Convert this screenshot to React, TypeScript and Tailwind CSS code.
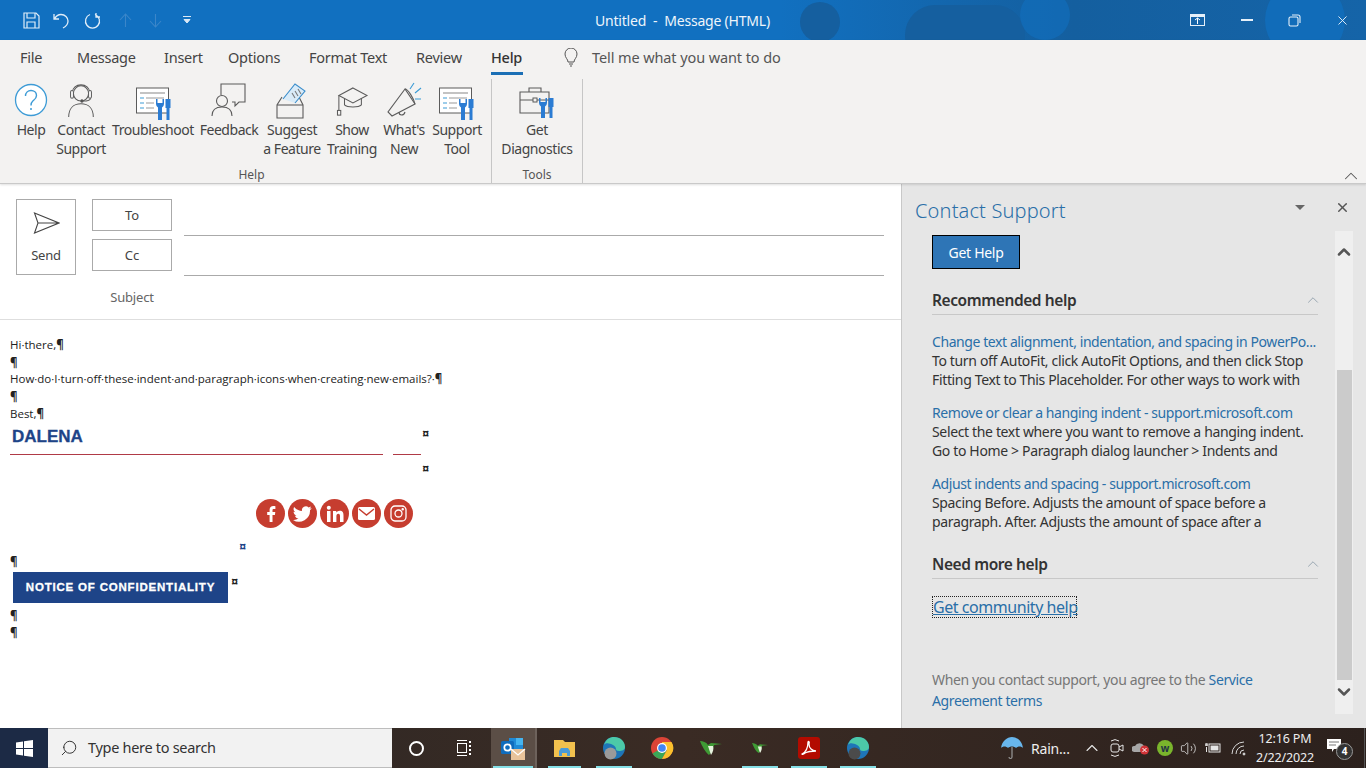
import React from "react";
import { Search, X, ChevronUp, ChevronDown, Volume2 } from "lucide-react";

const tabs: [string, string][] = [
  ["File", "w-[57px]"],
  ["Message", "w-[87px]"],
  ["Insert", "w-[64px]"],
  ["Options", "w-[81px]"],
  ["Format Text", "w-[107px]"],
  ["Review", "w-[75px]"],
];

const S = "#5b5b5b";
const B = "#2b7cd3";

const HelpIco = () => (
  <svg width="34" height="34" viewBox="0 0 34 34" fill="none">
    <circle cx="17" cy="17" r="15.5" stroke="#3d9bd6" strokeWidth="1.3" fill="#fff" />
    <path d="M11.5 13c0-3.5 2.5-5.5 5.5-5.5s5.5 2 5.5 5c0 3-2 4-3.700 5.500-1.300 1.100-1.800 2.300-1.800 4.500" stroke="#3d9bd6" strokeWidth="1.400" />
    <circle cx="17" cy="26" r="1" fill="#3d9bd6" />
  </svg>
);
const ContactIco = () => (
  <svg width="34" height="36" viewBox="0 0 34 38" fill="none" stroke={S} strokeWidth="1.100">
    <circle cx="17" cy="11" r="8" />
    <path d="M8 13v-3c0-5 4-8 9-8s9 3 9 8v3" />
    <rect x="6" y="8" width="3" height="8" rx="1.500" fill="#fff" />
    <rect x="25" y="8" width="3" height="8" rx="1.500" fill="#fff" />
    <path d="M27 16c0 2-3 3-8 3" />
    <circle cx="18" cy="19" r="1.200" fill="#333" />
    <path d="M4 36c0-9 5-14 13-14s13 5 13 14" />
  </svg>
);
const TroubleIco = () => (
  <svg width="36" height="34" viewBox="0 0 36 34" fill="none">
    <rect x="0.500" y="1" width="32" height="25" fill="#fff" stroke={S} strokeWidth="1" />
    <path d="M4 6h25" stroke="#9a9a9a" strokeWidth="1.200" />
    <path d="M4 11h4M4 16h4M4 21h4" stroke="#3d9bd6" strokeWidth="1.200" />
    <path d="M10 11h18M10 16h8M10 21h8" stroke="#9a9a9a" strokeWidth="1.200" />
    <path d="M20 12v5a4 4 0 0 0 2 3.400V33h4V20.400a4 4 0 0 0 2-3.400v-5h-1.500v4h-5v-4z" fill={B} />
    <path d="M29.500 12h5v9h-1v12h-3V21h-1z" fill={B} />
  </svg>
);
const FeedbackIco = () => (
  <svg width="36" height="36" viewBox="0 0 36 36" fill="none" stroke={S} strokeWidth="1.100">
    <path d="M10 12V1h24v18h-6l-4 4v-4h-3" />
    <circle cx="11" cy="18" r="5.500" fill="#f3f2f1" />
    <path d="M1 33c0-6 4-9 10-9s10 3 10 9" />
  </svg>
);
const SuggestIco = () => (
  <svg width="34" height="36" viewBox="0 0 34 36" fill="none" stroke={S} strokeWidth="1.100">
    <path d="M7 14l-5 8v13h26V22l-4-8" />
    <path d="M2 22h26" />
    <path d="M8 16L20 1l10 7-10 12" fill="#d9ebf8" stroke="#3a8dcb" />
    <path d="M17 10l3 5M20 8l3 5M23 6l3 5" stroke="#7a7a7a" />
  </svg>
);
const TrainingIco = () => (
  <svg width="34" height="30" viewBox="0 0 34 32" fill="none" stroke={S} strokeWidth="1.100">
    <path d="M18 1L33 9 18 17 3 9z" />
    <path d="M9 12v7c3 3 15 3 18 0v-7" />
    <path d="M3 9v16" />
    <rect x="1.500" y="25" width="3.500" height="5" />
  </svg>
);
const WhatsNewIco = () => (
  <svg width="38" height="38" viewBox="0 0 36 38" fill="none" stroke={S} strokeWidth="1.100">
    <path d="M19 8L2 31l4 4 23-12z" />
    <path d="M19 8c3 0 9 10 10 15" />
    <path d="M13 31c0 4 5 4 6 0" />
    <path d="M24 8l4-6M29 12l6-5M29 18h6" stroke="#3a9bd6" />
  </svg>
);
const DiagIco = () => (
  <svg width="36" height="32" viewBox="0 0 36 32" fill="none">
    <path d="M10 5V1h12v4M1 5h29v21H1zM1 13h13M18 13h12" stroke={S} strokeWidth="1.100" />
    <rect x="14" y="11" width="4" height="4" stroke={S} />
    <path d="M20 11v5a4 4 0 0 0 2 3.400V31h4V19.400a4 4 0 0 0 2-3.400v-5h-1.500v4h-5v-4z" fill={B} />
    <path d="M29.500 11h5v9h-1v11h-3V20h-1z" fill={B} />
  </svg>
);

const ribbon: { w: string; l: string[]; icon: React.ReactNode; top: string }[] = [
  { w: "w-[38px]", l: ["Help"], icon: <HelpIco />, top: "pt-[4px]" },
  { w: "w-[62px]", l: ["Contact", "Support"], icon: <ContactIco />, top: "pt-[4px]" },
  { w: "w-[82px]", l: ["Troubleshoot"], icon: <div className="pl-[1px]"><TroubleIco /></div>, top: "pt-[8px]" },
  { w: "w-[70px]", l: ["Feedback"], icon: <FeedbackIco />, top: "pt-[4px]" },
  { w: "w-[56px]", l: ["Suggest", "a Feature"], icon: <SuggestIco />, top: "pt-[4px]" },
  { w: "w-[64px]", l: ["Show", "Training"], icon: <TrainingIco />, top: "pt-[8px]" },
  { w: "w-[40px]", l: ["What's", "New"], icon: <WhatsNewIco />, top: "pt-[2px]" },
  { w: "w-[66px]", l: ["Support", "Tool"], icon: <TroubleIco />, top: "pt-[8px]" },
];

const RibbonItem = ({ w, l, icon, top }: { w: string; l: string[]; icon: React.ReactNode; top: string }) => (
  <div className={`${w} flex flex-col items-center`}>
    <div className={`h-[40px] flex items-start justify-center ${top}`}>{icon}</div>
    <div className="mt-[1px] text-center text-[14px] leading-[19px] text-[#444] whitespace-nowrap tracking-[-0.45px]">
      {l.map((t) => (
        <div key={t}>{t}</div>
      ))}
    </div>
  </div>
);

const Pilcrow = () => <div className="h-[17px] pt-[1px] leading-[17px] font-bold">¶</div>;

const Circle = ({ children }: { children: React.ReactNode }) => (
  <div className="w-[29px] h-[29px] rounded-full bg-[#c63d2f] flex items-center justify-center text-white">{children}</div>
);

const social = [
  <svg key="f" width="16" height="18" viewBox="0 0 16 18" fill="#fff"><path d="M9.500 17V10h2.400l.4-3H9.500V5.300c0-.9.300-1.400 1.400-1.400h1.500V1.200C12 1.100 11.200 1 10.300 1 8.100 1 6.600 2.300 6.600 4.800V7H4.200v3h2.400v7z" /></svg>,
  <svg key="t" width="19" height="16" viewBox="0 0 24 20" fill="#fff"><path d="M23.500 2.400c-.9.400-1.800.6-2.800.8 1-.6 1.800-1.500 2.100-2.700-.9.600-2 1-3.100 1.200A4.900 4.900 0 0 0 11.400 6.200C7.400 6 3.800 4.100 1.400 1.100c-1.300 2.200-.7 5.100 1.500 6.600-.8 0-1.500-.2-2.200-.6 0 2.400 1.700 4.400 3.900 4.900-.7.200-1.500.2-2.200.1.600 2 2.400 3.400 4.600 3.400A9.900 9.900 0 0 1 0 17.500 14 14 0 0 0 21.500 5.100c1-.7 1.800-1.600 2-2.700z" /></svg>,
  <svg key="i" width="18" height="18" viewBox="0 0 18 18" fill="#fff"><rect x="1" y="6" width="3.500" height="11" /><circle cx="2.800" cy="2.800" r="2" /><path d="M7 6h3.300v1.600C11 6.500 12.200 5.700 13.700 5.700c3 0 3.800 2 3.800 4.800V17H14v-5.800c0-1.400-.3-2.500-1.700-2.500s-1.900 1.100-1.900 2.500V17H7z" /></svg>,
  <svg key="m" width="17" height="13" viewBox="0 0 17 13"><rect width="17" height="13" rx="1.500" fill="#fff" /><path d="M1 2l7.500 6L16 2" fill="none" stroke="#c63d2f" strokeWidth="1.500" /></svg>,
  <svg key="g" width="17" height="17" viewBox="0 0 17 17" fill="none" stroke="#fff" strokeWidth="1.300"><rect x="1" y="1" width="15" height="15" rx="4" /><circle cx="8.500" cy="8.500" r="3.500" /><circle cx="12.700" cy="4.300" r=".6" fill="#fff" /></svg>,
];

const ArticleBlock = ({ t, a, b }: { t: string; a: string; b: string }) => (
  <div className="h-[71px] text-[14px] leading-[19px] whitespace-nowrap tracking-[-0.35px]">
    <div className="text-[#2a6fa8] tracking-[-0.42px]">{t}</div>
    <div className="text-[#333]">{a}</div>
    <div className="text-[#333]">{b}</div>
  </div>
);

const SectionHead = ({ t }: { t: string }) => (
  <div className="h-[26px] border-b border-[#c8c8c8] flex items-start justify-between">
    <span className="text-[15.500px] leading-[22px] font-semibold text-[#333] tracking-[-0.4px]">{t}</span>
    <ChevronUp className="w-[18px] h-[18px] mt-[2px] -mr-[4px] text-[#8a9aa8]" strokeWidth={1.100} />
  </div>
);

const Bar = ({ w }: { w: string }) => <div className={`absolute bottom-0 h-[2px] bg-[#85dfe6] ${w}`} />;

const Tb = ({ w, active, bar, children }: { w: string; active?: boolean; bar?: boolean; children: React.ReactNode }) => (
  <div className={`${w} h-full flex items-center justify-center relative ${active ? "bg-[#5b4e46] border-r-2 border-[#6d625b]" : ""}`}>
    {children}
    {bar && <Bar w="left-[2px] right-[2px]" />}
  </div>
);

const EdgeIco = ({ badge }: { badge: string }) => (
  <svg width="24" height="24" viewBox="0 0 24 24">
    <circle cx="12" cy="12" r="11" fill="#1e75b8" />
    <path d="M2 9C4 3 8 1 12 1c6 0 11 4 11 10 0 3-3 4-6 4-2 0-3-1-3-2 0-4-10-8-12-4z" fill="#4cc9a8" />
    <circle cx="8.500" cy="17.500" r="6" fill={badge} />
  </svg>
);

export default function App() {
  return (
    <div className="w-[1366px] h-[768px] overflow-hidden flex flex-col bg-white font-['Noto_Sans',sans-serif]">
      {/* Title bar */}
      <div className="h-[40px] shrink-0 bg-[#1170c0] relative flex items-center text-white overflow-hidden">
        <div className="absolute inset-y-0 right-0 w-[586px] bg-gradient-to-r from-[#1170c0] via-[#145f9f] to-[#1564a8]" />
        <div className="absolute left-[800px] top-[2px] w-[40px] h-[40px] rounded-full bg-[#155f9f]" />
        <div className="absolute left-[905px] top-[5px] w-[120px] h-[60px] rounded-full bg-[#155f9f]" />
        <div className="absolute left-[1020px] top-[-10px] w-[50px] h-[50px] rounded-full bg-[#1170c0] opacity-60" />
        <div className="absolute left-[1265px] top-[-20px] w-[80px] h-[80px] rounded-full bg-[#116cb9]" />
        <div className="relative flex items-center pl-[23px] gap-[13px]">
          <svg width="17" height="17" viewBox="0 0 17 17" fill="none" stroke="#e0edf8" strokeWidth="1.200"><path d="M1 1h12l3 3v12H1z" /><path d="M4 1v5h8V1M4 16v-6h8v6" /></svg>
          <svg width="18" height="17" viewBox="0 0 18 17" fill="none" stroke="#e0edf8" strokeWidth="1.300"><path d="M1 2v5h5M1.500 7C3 4 5 2.500 8 2.500c4 0 7 3 7 6.500 0 3-2 5.500-5 7" /></svg>
          <svg width="18" height="17" viewBox="0 0 18 17" fill="none" stroke="#e0edf8" strokeWidth="1.300"><path d="M11 2.500a7 7 0 1 1-5 0M12 1v4h4" /></svg>
          <svg className="ml-[3px]" width="15" height="15" viewBox="0 0 15 15" fill="none" stroke="#3b86c9" strokeWidth="1.100"><path d="M7.500 14V1M2 7l5.500-6L13 7" /></svg>
          <svg className="ml-[2px]" width="15" height="15" viewBox="0 0 15 15" fill="none" stroke="#3b86c9" strokeWidth="1.100"><path d="M7.500 1v13M2 8l5.500 6L13 8" /></svg>
          <svg className="ml-[6px]" width="10" height="10" viewBox="0 0 10 10" fill="none" stroke="#dbe9f6" strokeWidth="1"><path d="M1 1.500h8" /><path d="M2 4.500h6L5 8z" fill="#dbe9f6" /></svg>
        </div>
        <div className="absolute left-[595px] top-0 h-full flex items-center text-[14px] text-[#eef5fb] tracking-[-0.2px] whitespace-pre">Untitled  -  Message (HTML)</div>
        <div className="ml-auto relative flex items-center h-full">
          <svg width="15" height="12" viewBox="0 0 15 12" className="mr-[36px]"><rect width="15" height="12" fill="#e6f0f9" /><rect x="1" y="3" width="13" height="8" fill="#1664a8" /><path d="M7.500 4v6M5 6l2.500-2L10 6" stroke="#fff" fill="none" /></svg>
          <div className="w-[12px] h-[1.500px] bg-[#e6f0f9] mr-[35px]" />
          <svg width="13" height="13" viewBox="0 0 13 13" fill="none" stroke="#e6f0f9" strokeWidth="1.100" className="mr-[34px]"><rect x="1" y="3" width="9" height="9" rx="1.500" /><path d="M4 1h6a2 2 0 0 1 2 2v6" /></svg>
          <X className="w-[15px] h-[15px] mr-[16px] text-[#e6f0f9]" strokeWidth={1.500} />
        </div>
      </div>

      {/* Ribbon */}
      <div className="h-[144px] shrink-0 bg-[#f3f2f1] border-b border-[#c9c9c9] shadow-[0_1px_2px_rgba(0,0,0,0.12)] relative z-10 text-[#444]">
        <div className="h-[36px] flex items-center pl-[20px] text-[14.500px] tracking-[-0.25px] whitespace-nowrap">
          {tabs.map(([t, c]) => (
            <div key={t} className={c}>{t}</div>
          ))}
          <div className="relative w-[72px] font-medium text-[#333]">
            Help
            <div className="absolute left-0 w-[32px] top-[25px] h-[3px] bg-[#1b6fb5]" />
          </div>
          <svg width="16" height="20" viewBox="0 0 16 20" fill="none" stroke="#555" strokeWidth="1" className="mr-[13px]"><path d="M5 14c0-3-3-4-3-8a6 6 0 0 1 12 0c0 4-3 5-3 8zM6 16h4M7 18h2" /></svg>
          <span className="text-[14.500px] text-[#555] tracking-[-0.1px]">Tell me what you want to do</span>
        </div>
        <div className="h-[107px] flex pl-[12px]">
          <div className="relative w-[480px] h-[104px] flex border-r border-[#c6c6c6] mt-[3px]">
            {ribbon.map((r, i) => (
              <RibbonItem key={i} {...r} />
            ))}
            <div className="absolute bottom-0 inset-x-0 text-center text-[12px] leading-[16px] text-[#555]">Help</div>
          </div>
          <div className="relative w-[91px] h-[104px] flex border-r border-[#c6c6c6] mt-[3px]">
            <RibbonItem w="w-[90px]" l={["Get", "Diagnostics"]} icon={<DiagIco />} top="pt-[8px]" />
            <div className="absolute bottom-0 inset-x-0 text-center text-[12px] leading-[16px] text-[#555]">Tools</div>
          </div>
        </div>
        <ChevronUp className="absolute right-[4px] bottom-[-4px] w-[22px] h-[22px] text-[#555]" strokeWidth={1.100} />
      </div>

      {/* Main */}
      <div className="flex-1 min-h-0 flex">
        <div className="w-[901px] shrink-0 bg-white flex flex-col">
          {/* header */}
          <div className="h-[136px] shrink-0 border-b border-[#dedede] flex pl-[16px] pt-[15px]">
            <div className="w-[60px] h-[76px] border border-[#aaa] flex flex-col items-center pt-[11px]">
              <svg width="27" height="24" viewBox="0 0 27 24" fill="none" stroke="#444" strokeWidth="1.100"><path d="M1.500 2L26 12 1.500 22 5 12zM5 12h21" /></svg>
              <div className="mt-[11px] text-[13px] text-[#444] leading-[18px] tracking-[-0.2px]">Send</div>
            </div>
            <div className="ml-[16px] w-[80px] flex flex-col">
              <div className="h-[32px] border border-[#aaa] flex items-center justify-center pt-[1px] text-[13px] text-[#444]">To</div>
              <div className="mt-[8px] h-[32px] border border-[#aaa] flex items-center justify-center pt-[1px] text-[13px] text-[#444]">Cc</div>
              <div className="mt-[17px] text-center text-[13px] leading-[18px] text-[#666] tracking-[-0.2px]">Subject</div>
            </div>
            <div className="ml-[12px] w-[700px]">
              <div className="h-[37px] border-b border-[#aaa]" />
              <div className="h-[40px] border-b border-[#aaa]" />
            </div>
          </div>
          {/* body */}
          <div className="flex-1 pl-[10px] pt-[16px] text-[11.500px] leading-[17px] text-[#222] font-['Open_Sans',sans-serif]">
            <div className="h-[17px]">Hi·there,<b>¶</b></div>
            <Pilcrow />
            <div className="h-[17px] whitespace-nowrap">How·do·I·turn·off·these·indent·and·paragraph·icons·when·creating·new·emails?·<b>¶</b></div>
            <Pilcrow />
            <div className="h-[17px] pt-[1px]">Best,<b>¶</b></div>
            <div className="w-[421px] h-[33px] mt-[4px] relative flex items-start">
              <span className="ml-[2px] font-['Liberation_Sans',sans-serif] font-bold text-[#1e4488] text-[17px] leading-[24px] [-webkit-text-stroke:0.3px_#1e4488]">DALENA</span>
              <span className="absolute left-[412px] top-[2px] text-[13px] leading-[12px] font-bold">¤</span>
            </div>
            <div className="w-[411px] flex gap-[10px] -mt-[4px]">
              <div className="w-[373px] h-px bg-[#b03a46]" />
              <div className="w-[28px] h-px bg-[#b03a46]" />
            </div>
            <div className="w-[421px] h-[10px] pl-[412px] mt-[7px] pt-[1px] text-[13px] leading-[10px] font-bold">¤</div>
            <div className="pl-[246px] flex gap-[3px] mt-[27px]">
              {social.map((s, i) => (
                <Circle key={i}>{s}</Circle>
              ))}
            </div>
            <div className="pl-[229px] mt-[10px] pt-[1px] h-[14px] text-[13px] leading-[14px] font-bold text-[#1e4488]">¤</div>
            <div><Pilcrow /></div>
            <div className="ml-[3px] mt-[3px] flex items-start">
              <div className="w-[215px] h-[31px] bg-[#1e4488] flex items-center justify-center text-white font-['Liberation_Sans',sans-serif] font-bold text-[11.500px] tracking-[0.8px] whitespace-nowrap [-webkit-text-stroke:0.3px_#fff]">NOTICE OF CONFIDENTIALITY</div>
              <span className="ml-[3px] pt-[2px] text-[13px] leading-[14px] font-bold">¤</span>
            </div>
            <div className="mt-[3px]"><Pilcrow /></div>
            <Pilcrow />
          </div>
        </div>

        {/* Side panel */}
        <div className="flex-1 min-w-0 bg-[#e6e6e6] border-l border-[#c8c8c8] flex flex-col">
          <div className="h-[47px] shrink-0 flex items-center pl-[13px] relative">
            <span className="text-[20px] text-[#2a6fa8] tracking-[0.15px] mt-[6px] font-light">Contact Support</span>
            <div className="absolute left-[393px] top-[21px] w-0 h-0 border-x-[5px] border-x-transparent border-t-[5px] border-t-[#666]" />
            <X className="absolute left-[433px] top-[16px] w-[15px] h-[15px] text-[#555]" strokeWidth={2.400} />
          </div>
          <div className="flex-1 min-h-0 flex">
            <div className="w-[433px] shrink-0 pl-[30px] pr-[17px] pt-[4px]">
              <div className="w-[88px] h-[34px] bg-[#2e75b6] border border-black flex items-center justify-center text-white text-[14px] tracking-[-0.3px]">Get Help</div>
              <div className="mt-[20px]"><SectionHead t="Recommended help" /></div>
              <div className="mt-[17px]">
                <ArticleBlock t="Change text alignment, indentation, and spacing in PowerPo..." a="To turn off AutoFit, click AutoFit Options, and then click Stop" b="Fitting Text to This Placeholder. For other ways to work with" />
                <ArticleBlock t="Remove or clear a hanging indent - support.microsoft.com" a="Select the text where you want to remove a hanging indent." b="Go to Home > Paragraph dialog launcher > Indents and" />
                <ArticleBlock t="Adjust indents and spacing - support.microsoft.com" a="Spacing Before. Adjusts the amount of space before a" b="paragraph. After. Adjusts the amount of space after a" />
              </div>
              <div className="mt-[8px]"><SectionHead t="Need more help" /></div>
              <div className="mt-[17px] w-[145px] h-[22px] border border-dotted border-[#222] text-[16px] leading-[20px] text-[#2a6fa8] underline whitespace-nowrap tracking-[-0.45px]">Get community help</div>
              <div className="mt-[51px] text-[14px] leading-[21px] text-[#777] tracking-[-0.38px] whitespace-nowrap">
                <div>When you contact support, you agree to the <span className="text-[#2a6fa8]">Service</span></div>
                <div className="text-[#2a6fa8]">Agreement terms</div>
              </div>
            </div>
            <div className="w-[18px] h-[483px] bg-[#efefef] flex flex-col items-center">
              <ChevronUp className="w-[20px] h-[20px] mt-[11px] text-[#555] shrink-0" strokeWidth={3} />
              <div className="w-[15px] h-[310px] bg-[#cbcbcb] mt-[108px] shrink-0" />
              <ChevronDown className="w-[20px] h-[20px] mt-[2px] text-[#555] shrink-0" strokeWidth={3} />
            </div>
          </div>
        </div>
      </div>

      {/* Taskbar */}
      <div className="h-[40px] shrink-0 bg-gradient-to-r from-[#2b2725] via-[#3a2b24] to-[#2c211d] flex items-center text-white">
        <div className="w-[48px] h-full bg-[#1c2a45] flex items-center justify-center">
          <svg width="17" height="17" viewBox="0 0 17 17" fill="#fff"><path d="M0 2.500L7 1.500V8H0zM8 1.300L17 0v8H8zM0 9h7v6.500L0 14.500zM8 9h9v8l-9-1.300z" /></svg>
        </div>
        <div className="w-[344px] h-full bg-[#f2f2f2] border-y border-[#bdbdbd] flex items-center pl-[12px] text-[#333]">
          <Search className="w-[18px] h-[18px] -scale-x-100 text-[#333]" strokeWidth={1.300} />
          <span className="ml-[10px] text-[14.500px] tracking-[-0.3px]">Type here to search</span>
        </div>
        <div className="w-[49px] flex justify-center"><div className="w-[15px] h-[15px] rounded-full border-2 border-white" /></div>
        <div className="w-[46px] flex justify-center">
          <svg width="17" height="16" viewBox="0 0 17 16" fill="none" stroke="#fff"><path d="M1 .5h10M1 15.500h10" /><rect x="1.500" y="3.500" width="9" height="9" /><path d="M14 1v14" strokeDasharray="2 2" strokeWidth="2" /></svg>
        </div>
        <div className="w-[4px]" />
        <Tb w="w-[46px]" active bar>
          <svg width="26" height="24" viewBox="0 0 26 24">
            <rect x="9" y="2" width="14" height="14" fill="#1f8ad6" />
            <rect x="16" y="2" width="7" height="7" fill="#45b5f0" />
            <rect x="1" y="5" width="13" height="13" rx="1.500" fill="#0f6cbd" />
            <circle cx="7.500" cy="11.500" r="3.200" fill="none" stroke="#fff" strokeWidth="1.700" />
            <rect x="11" y="13" width="14" height="11" fill="#e8c39a" />
            <path d="M11 13l7 6 7-6" fill="none" stroke="#fff" strokeWidth="1.200" />
          </svg>
        </Tb>
        <div className="w-[9px]" />
        <Tb w="w-[37px]" bar>
          <svg width="23" height="19" viewBox="0 0 23 19"><path d="M1 1h9l2 2h10v15H1z" fill="#f2c14e" /><path d="M8 9h7l2 3v5h-3v-3H9v3H6v-5z" fill="#4a9bd8" /></svg>
        </Tb>
        <div className="w-[11px]" />
        <Tb w="w-[40px]" bar><EdgeIco badge="#9a9a9a" /></Tb>
        <div className="w-[8px]" />
        <Tb w="w-[40px]">
          <svg width="24" height="24" viewBox="0 0 24 24"><circle cx="12" cy="12" r="11" fill="#db4437" /><path d="M12 12L2.500 17.500A11 11 0 0 0 12 23l5-9z" fill="#3aa757" /><path d="M12 12l5 2-5 9a11 11 0 0 0 9.500-17H12z" fill="#fbc02d" /><circle cx="12" cy="12" r="5" fill="#fff" /><circle cx="12" cy="12" r="3.800" fill="#4285f4" /></svg>
        </Tb>
        <div className="w-[9px]" />
        <Tb w="w-[40px]">
          <svg width="22" height="16" viewBox="0 0 22 16"><path d="M0 1c3 0 6 1 8 4l3-2 11 1-8 1c-1 5-3 8-5 10C5 12 2 6 0 1z" fill="#3f9a35" /><path d="M8 6l3 9c2-3 3-6 2-9z" fill="#e8f3df" /></svg>
        </Tb>
        <div className="w-[9px]" />
        <Tb w="w-[40px]" bar>
          <svg width="16" height="14" viewBox="0 0 22 16"><path d="M0 1c3 0 6 1 8 4l3-2 11 1-8 1c-1 5-3 8-5 10C5 12 2 6 0 1z" fill="#3f9a35" /><path d="M8 6l3 9c2-3 3-6 2-9z" fill="#e8f3df" /></svg>
        </Tb>
        <div className="w-[9px]" />
        <Tb w="w-[40px]" bar>
          <svg width="22" height="22" viewBox="0 0 22 22"><rect width="22" height="22" rx="3" fill="#b30b00" /><path d="M4 17c4-2 6-7 6-12 0-1 2-1 1 2 0 4 3 7 7 7-3 0-9 1-11 2-1 1-3 2-3 1z" fill="none" stroke="#fff" strokeWidth="1.300" /></svg>
        </Tb>
        <div className="w-[9px]" />
        <Tb w="w-[40px]" bar><EdgeIco badge="#4b4b4b" /></Tb>

        <div className="ml-auto flex items-center h-full">
          <svg width="24" height="26" viewBox="0 0 24 26" className="mr-[7px]"><path d="M1 13C2 6 7 2 12 2s10 4 11 11c-2-2-5-2-7 0-2-2-6-2-8 0-2-2-5-2-7 0z" fill="#68b6ec" /><path d="M12 12v10c0 2-3 2-3 0" stroke="#999" strokeWidth="1.200" fill="none" /></svg>
          <span className="text-[14px] text-[#eee] w-[53px] tracking-[-0.2px]">Rain...</span>
          <ChevronUp className="w-[20px] h-[20px] -mx-[2px] mr-[6px] text-[#e6e6e6]" strokeWidth={1.300} />
          <svg width="16" height="18" viewBox="0 0 16 18" fill="none" stroke="#e6e6e6" className="mr-[8px]"><path d="M3 2a7 7 0 0 1 8 0M3 16a7 7 0 0 0 8 0" /><rect x="3" y="5" width="8" height="8" rx="2" /><path d="M11 8l4-2v6l-4-2" /></svg>
          <svg width="18" height="14" viewBox="0 0 18 14" className="mr-[7px]"><path d="M2 11a3 3 0 0 1 1-6 5 5 0 0 1 9 0 3 3 0 0 1 1 6z" fill="#a7a7a7" /><circle cx="12.500" cy="9" r="4.500" fill="#d13438" /><path d="M10.500 7l4 4M14.500 7l-4 4" stroke="#fff" /></svg>
          <div className="w-[16px] h-[16px] rounded-full bg-[#7ab52c] mr-[7px] flex items-center justify-center text-[10px] font-bold text-[#234]">w</div>
          <Volume2 className="w-[17px] h-[17px] mr-[7px] text-[#e6e6e6]" strokeWidth={1.100} />
          <svg width="17" height="12" viewBox="0 0 17 12" fill="none" stroke="#e6e6e6" className="mr-[9px]"><rect x="5" y="2" width="11" height="8" /><rect x="7" y="4" width="7" height="4" fill="#e6e6e6" /><path d="M1 3h3M2 1v3M3 1v3M2.500 5v5" /></svg>
          <svg width="16" height="16" viewBox="0 0 16 16" fill="none" stroke="#d6d6d6" className="mr-[6px]"><path d="M10 14a4 4 0 0 1 4-4M6 14a8 8 0 0 1 8-8M2 14A12 12 0 0 1 14 2" /><circle cx="14" cy="14" r="1" fill="#d6d6d6" /></svg>
          <div className="w-[66px] text-center text-[12.500px] leading-[19px] text-[#eee] whitespace-nowrap tracking-[-0.15px]">
            <div>12:16 PM</div>
            <div>2/22/2022</div>
          </div>
          <div className="w-[43px] ml-[4px] relative h-full flex items-center justify-center border-r border-[#555] mr-[1px]">
            <svg width="14" height="14" viewBox="0 0 14 14" className="-ml-[18px] -mt-[4px]"><path d="M0 0h14v10H7l-2 3v-3H0z" fill="#fff" /><path d="M2 3h10M2 6h7" stroke="#777" /></svg>
            <div className="absolute left-[14px] top-[15px] w-[17px] h-[17px] rounded-full bg-[#333] border border-[#999] flex items-center justify-center text-[10px] font-bold text-white">4</div>
          </div>
        </div>
      </div>
    </div>
  );
}
